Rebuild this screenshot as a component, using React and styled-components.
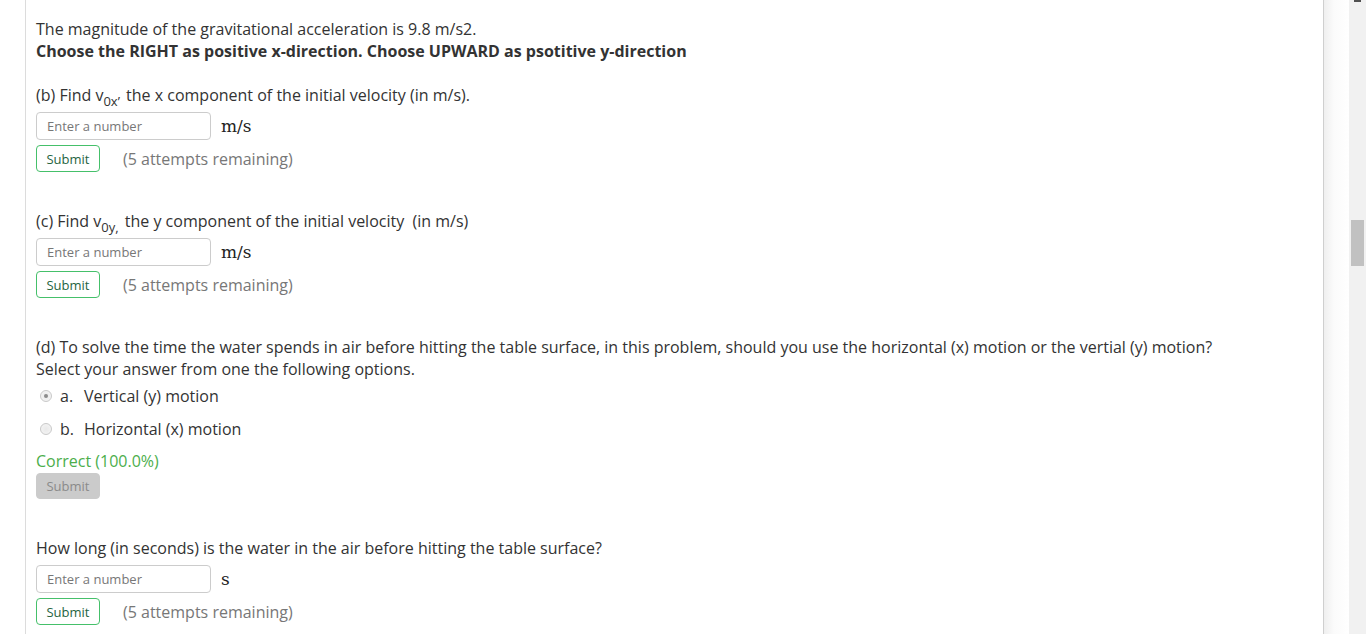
import React from "react"
import styled, { createGlobalStyle } from "styled-components"

const GlobalStyle = createGlobalStyle`
    html, body {
        margin: 0;
        padding: 0;
        overflow: hidden;
        background: #fff;
    }
    body {
        font-family: "Open Sans", "Liberation Sans", sans-serif;
        font-size: 16px;
        color: #333;
    }
`

const Page = styled.div`
    display: flex;
    height: 634px;
    padding-left: 25px;
`

const Panel = styled.main`
    width: 1277px;
    border-left: 1px solid #dcdcdc;
    border-right: 1px solid #cfcfcf;
    padding: 18px 10px 0 10px;
    overflow: hidden;
`

const Shade = styled.div`
    width: 25px;
    background: linear-gradient(to right, #efefef, #fbfbfb 40%, #fff);
`

const Scrollbar = styled.div`
    width: 17px;
    background: #f1f1f1;
    display: flex;
    flex-direction: column;
    align-items: center;
`

const ArrowTip = styled.div`
    width: 7px;
    height: 2px;
    background: #505050;
`

const Thumb = styled.div`
    width: 13px;
    height: 46px;
    margin-top: 218px;
    background: #c1c1c1;
`

const Line = styled.p`
    margin: 0;
    line-height: 22px;
    font-weight: ${p => (p.$bold ? 700 : 400)};
    color: ${p => p.$color || "#333"};
`

const Part = styled.section`
    margin-top: ${p => p.$top || 38}px;
`

const Sub = styled.sub`
    font-size: 13px;
    line-height: 0;
    vertical-align: baseline;
    position: relative;
    top: 5px;
    margin-right: 2px;
`

const InputRow = styled.div`
    display: flex;
    align-items: center;
    gap: 10px;
    margin-top: 6px;
    height: 28px;
`

const NumberInput = styled.input`
    box-sizing: border-box;
    width: 175px;
    height: 28px;
    border: 1px solid #ccc;
    border-radius: 4px;
    padding: 0 10px;
    font-family: "Open Sans", "Liberation Sans", sans-serif;
    font-size: 13px;
    color: #333;
    outline: none;
    &::placeholder {
        color: #777;
    }
`

const Unit = styled.span`
    font-family: "DejaVu Serif", "Liberation Serif", serif;
    font-size: 17px;
    color: #222;
`

const SubmitRow = styled.div`
    display: flex;
    align-items: center;
    gap: 23px;
    margin-top: ${p => p.$top ?? 5}px;
`

const SubmitButton = styled.button`
    box-sizing: border-box;
    width: 64px;
    height: ${p => (p.disabled ? 26 : 27)}px;
    border-radius: 4px;
    border: 1px solid ${p => (p.disabled ? "#cbcbcb" : "#45c06a")};
    background: ${p => (p.disabled ? "#cbcbcb" : "#fff")};
    color: ${p => (p.disabled ? "#8a8a8a" : "#26643f")};
    font-family: "Open Sans", "Liberation Sans", sans-serif;
    font-size: 13px;
    padding: 0;
    cursor: ${p => (p.disabled ? "default" : "pointer")};
`

const Attempts = styled.span`
    color: #777;
    font-size: 16px;
`

const OptionList = styled.div`
    margin-top: -1px;
`

const Option = styled.label`
    display: flex;
    align-items: center;
    height: 33px;
    padding-left: 4px;
`

const Radio = styled.span`
    box-sizing: border-box;
    width: 12px;
    height: 12px;
    border-radius: 50%;
    border: 1px solid #c9c9c9;
    background: radial-gradient(circle, #e9e9e9, #f6f6f6);
    display: flex;
    align-items: center;
    justify-content: center;
    margin-right: 8px;
    &::after {
        content: "";
        width: 4px;
        height: 4px;
        border-radius: 50%;
        background: ${p => (p.$checked ? "#8c8c8c" : "transparent")};
    }
`

const OptionKey = styled.span`
    width: 24px;
`

const Feedback = styled(Line)`
    margin-top: 5px;
`

const NumericPart = ({ label, unit, top }) => (
    <Part $top={top}>
        <Line>{label}</Line>
        <InputRow>
            <NumberInput placeholder="Enter a number" />
            <Unit>{unit}</Unit>
        </InputRow>
        <SubmitRow>
            <SubmitButton>Submit</SubmitButton>
            <Attempts>(5 attempts remaining)</Attempts>
        </SubmitRow>
    </Part>
)

const App = () => {
    return (
        <Page>
            <GlobalStyle />
            <Panel>
                <Line>The magnitude of the gravitational acceleration is 9.8 m/s2.</Line>
                <Line $bold>Choose the RIGHT as positive x-direction. Choose UPWARD as psotitive y-direction</Line>

                <NumericPart
                    top={22}
                    unit="m/s"
                    label={<>(b) Find v<Sub>0x’</Sub> the x component of the initial velocity (in m/s).</>}
                />
                <NumericPart
                    unit="m/s"
                    label={<>(c) Find v<Sub>0y,</Sub> the y component of the initial velocity &nbsp;(in m/s)</>}
                />

                <Part>
                    <Line>(d) To solve the time the water spends in air before hitting the table surface, in this problem, should you use the horizontal (x) motion or the vertial (y) motion?</Line>
                    <Line>Select your answer from one the following options.</Line>
                    <OptionList>
                        <Option>
                            <Radio $checked />
                            <OptionKey>a.</OptionKey>
                            Vertical (y) motion
                        </Option>
                        <Option>
                            <Radio />
                            <OptionKey>b.</OptionKey>
                            Horizontal (x) motion
                        </Option>
                    </OptionList>
                    <Feedback $color="#4cae4c">Correct (100.0%)</Feedback>
                    <SubmitRow $top={1}>
                        <SubmitButton disabled>Submit</SubmitButton>
                    </SubmitRow>
                </Part>

                <NumericPart
                    unit="s"
                    label="How long (in seconds) is the water in the air before hitting the table surface?"
                />
            </Panel>
            <Shade />
            <Scrollbar>
                <ArrowTip />
                <Thumb />
            </Scrollbar>
        </Page>
    )
}

export default App
